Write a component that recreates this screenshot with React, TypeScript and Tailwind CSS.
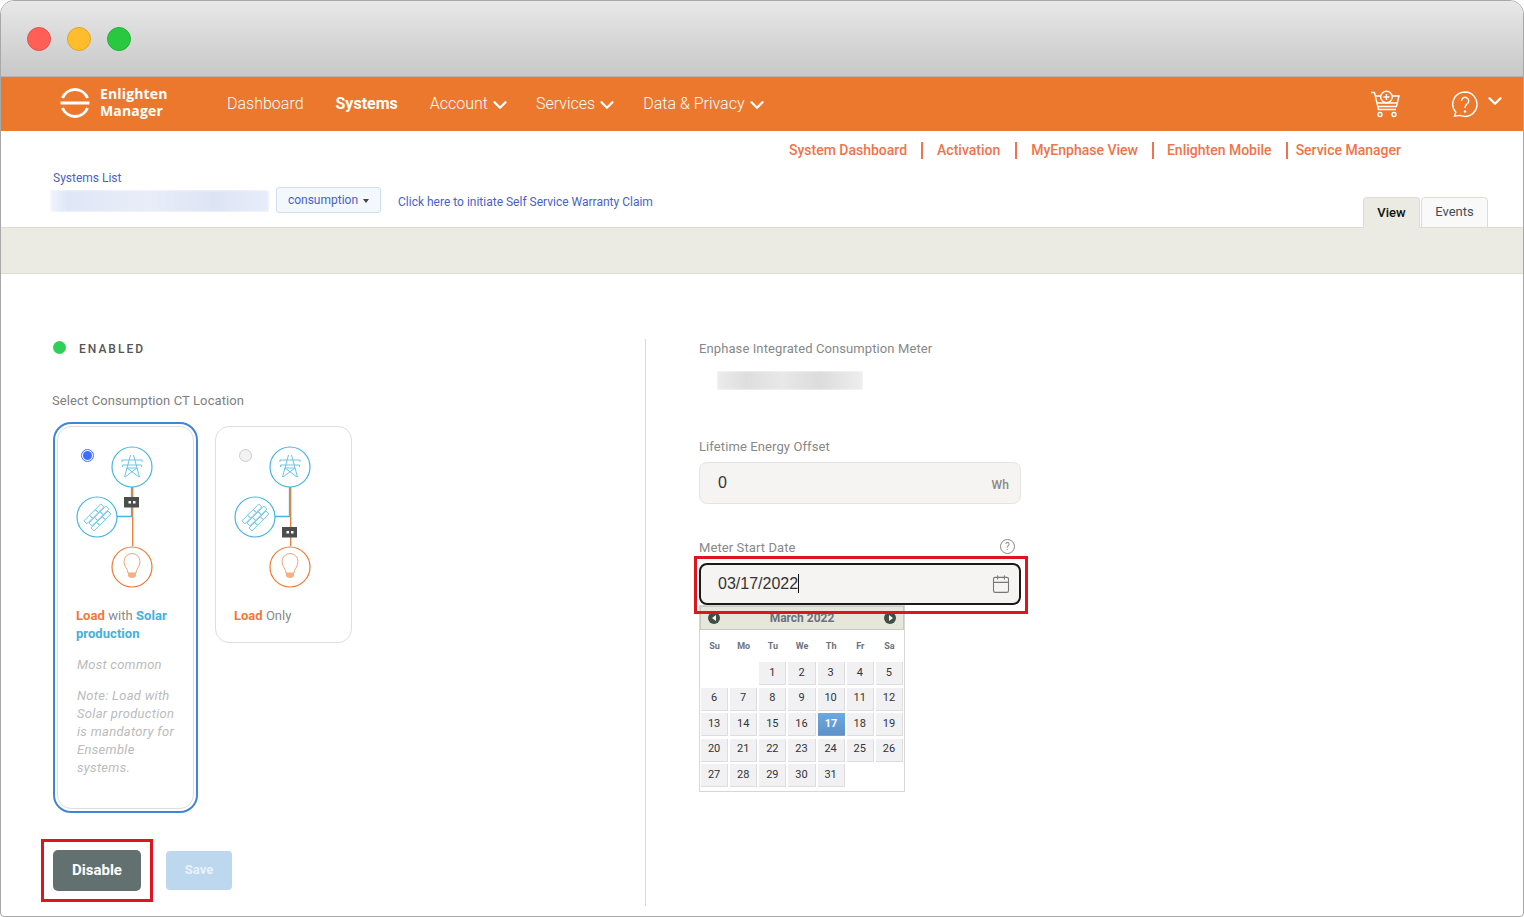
import { ChevronDown, Calendar } from 'lucide-react';

const navItems = [
  { label: 'Dashboard', ml: 'ml-0' },
  { label: 'Systems', bold: true, ml: 'ml-[32px]' },
  { label: 'Account', caret: true, ml: 'ml-[32px]' },
  { label: 'Services', caret: true, ml: 'ml-[25px]' },
  { label: 'Data & Privacy', caret: true, ml: 'ml-[25px]' },
];

const weekDays = ['Su', 'Mo', 'Tu', 'We', 'Th', 'Fr', 'Sa'];
const days = [0, 0, 1, 2, 3, 4, 5, 6, 7, 8, 9, 10, 11, 12, 13, 14, 15, 16, 17, 18, 19, 20, 21, 22, 23, 24, 25, 26, 27, 28, 29, 30, 31];

function Logo() {
  return (
    <svg width="30" height="30" viewBox="0 0 30 30" fill="none" stroke="#fff" strokeWidth="3">
      <path d="M2.5 10A13.5 13.5 0 0 1 27.5 10" />
      <path d="M2.5 20A13.5 13.5 0 0 0 27.5 20" />
      <path d="M0.5 15H29.5" />
    </svg>
  );
}

function Cart() {
  return (
    <svg width="30" height="28" viewBox="0 0 30 28" fill="none" stroke="#fff" strokeWidth="1.4">
      <path d="M1 2.5H4.5L8.5 19.5H26" />
      <path d="M5.5 6H10.5M22 6H29L26.5 16.5H7.8" />
      <path d="M7 13H27.5" />
      <circle cx="16.5" cy="7" r="5.8" />
      <path d="M16.5 4V10M13.5 7H19.5" />
      <circle cx="10" cy="24.5" r="2" />
      <circle cx="24" cy="24.5" r="2" />
    </svg>
  );
}

function Help() {
  return (
    <svg width="26" height="27" viewBox="0 0 26 27" fill="none" stroke="#fff" strokeWidth="1.4">
      <path d="M13 1A12.2 12.2 0 1 1 8 24.4L2.5 25.2L3.8 21.2A12.2 12.2 0 0 1 13 1Z" />
      <path d="M9.5 10A3.6 3.6 0 1 1 15 13C13.6 14 13 15 13 17" />
      <circle cx="13" cy="20.5" r="0.6" />
    </svg>
  );
}

// grid / solar / load schematic, the meter block moves with the CT location
function Diagram({ meterY }: { meterY: number }) {
  const rows = [-6.5, -1.5, 3.5];
  const cols = [-12, -4, 4];
  return (
    <svg width="80" height="144" viewBox="0 0 80 144" fill="none">
      <path d="M56.7 41V100" stroke="#ee7a30" strokeWidth="1.3" />
      <path d="M55.5 41V70.5H41" stroke="#45b5e0" strokeWidth="1.3" />
      <circle cx="56" cy="21" r="20" fill="#fff" stroke="#45b5e0" strokeWidth="1.2" />
      <circle cx="21" cy="71" r="20" fill="#fff" stroke="#45b5e0" strokeWidth="1.2" />
      <circle cx="56" cy="121" r="20" fill="#fff" stroke="#ee7a30" strokeWidth="1.2" />
      <g stroke="#6cc4e6" strokeWidth="1">
        <path d="M54.5 9L48.5 31M57.5 9L63.5 31" />
        <path d="M46 14H66M46 14V16M66 14V16M46.5 19H65.5M46.5 19V21M65.5 19V21M51 22H61" />
        <path d="M51 22L63 31M61 22L49 31" />
      </g>
      <g stroke="#6cc4e6" strokeWidth="0.9" transform="rotate(-45 21 71)">
        {rows.map((y, r) =>
          cols.map(x => (
            <rect key={`${r}${x}`} x={21 + x + (r === 1 ? 2 : 0)} y={71 + y} width="8" height="4.2" />
          ))
        )}
      </g>
      <path d="M52 127C52 123 48 121 48 115.5A8 8 0 0 1 64 115.5C64 121 60 123 60 127Z" stroke="#f0a577" strokeWidth="1" />
      <path d="M52 127H60V130C59 132.5 53 132.5 52 130Z" fill="#f3b088" />
      <rect x={48} y={meterY} width="15" height="10.5" fill="#4d4d4d" />
      <rect x={52.5} y={meterY + 4} width="2.5" height="2.5" fill="#fff" />
      <rect x={57} y={meterY + 4} width="2.5" height="2.5" fill="#fff" />
    </svg>
  );
}

export default function App() {
  return (
    <div className="relative h-[917px] w-[1524px] overflow-hidden bg-white font-['Roboto',sans-serif]">
      <div className="flex h-[917px] flex-col overflow-hidden rounded-t-[14px] rounded-b-[4px] border border-[#a8a8a8]">
        {/* window chrome */}
        <div className="flex h-[76px] shrink-0 items-center gap-[14px] border-b border-[#b5b5b5] bg-gradient-to-b from-[#e8e8e8] to-[#c8c8c8] pl-[26px]">
          <span className="h-6 w-6 rounded-full border border-[#e5524d] bg-[#ff5f57]" />
          <span className="ml-[2px] h-6 w-6 rounded-full border border-[#e0a528] bg-[#ffbd2e]" />
          <span className="ml-[2px] h-6 w-6 rounded-full border border-[#22b23a] bg-[#28c940]" />
        </div>

        {/* orange nav */}
        <div className="flex h-[54px] shrink-0 items-center bg-[#eb782d] pl-[59px] text-white">
          <div className="mb-[2px]"><Logo /></div>
          <div className="mb-[4px] ml-[10px] w-[117px] font-['Open_Sans',sans-serif] text-[14px] leading-[17px] font-bold tracking-[0.15px]">
            <div>Enlighten</div>
            <div>Manager</div>
          </div>
          <div className="ml-[10px] flex items-center text-[16px]">
            {navItems.map(item => (
              <div key={item.label} className={`flex items-center ${item.ml} ${item.bold ? 'font-bold' : 'font-light'}`}>
                {item.label}
                {item.caret && <ChevronDown size={22} strokeWidth={2.5} className="ml-[1px] mt-[2px]" />}
              </div>
            ))}
          </div>
          <div className="ml-auto flex items-center">
            <Cart />
            <div className="ml-[52px]"><Help /></div>
            <ChevronDown size={22} strokeWidth={2.5} className="mb-[6px] ml-[6px] mr-[17px]" />
          </div>
        </div>

        {/* sub header */}
        <div className="relative h-[96px] shrink-0">
          <div className="flex h-[38px] items-center justify-end pr-[122px] pt-[1px] text-[14px] font-medium text-[#f0734a]">
            <span className="pr-[14px]">System Dashboard</span>
            <span className="border-l-2 border-[#f0734a] pl-[14px] pr-[15px] leading-[17px]">Activation</span>
            <span className="border-l-2 border-[#f0734a] pl-[14px] pr-[14px] leading-[17px]">MyEnphase View</span>
            <span className="border-l-2 border-[#f0734a] pl-[13px] pr-[14px] leading-[17px]">Enlighten Mobile</span>
            <span className="border-l-2 border-[#f0734a] pl-[8px] leading-[17px]">Service Manager</span>
          </div>
          <div className="pl-[52px] text-[12px] text-[#4a5fc7]">Systems List</div>
          <div className="flex items-start pl-[49px]">
            <div className="mt-[3px] h-[22px] w-[219px] overflow-hidden">
              <div className="h-full w-full bg-[linear-gradient(90deg,#f1f4fb_0%,#dfe6f7_8%,#e6ebf8_30%,#e9edf9_45%,#dde4f5_75%,#e8edf9_100%)] blur-[1px]" />
            </div>
            <div className="ml-[7px] flex h-[26px] w-[105px] items-center justify-center rounded-[3px] border border-[#cfdff0] bg-[#f3f8fc] text-[12px] text-[#4a5fc7]">
              consumption
              <span className="ml-[5px] mt-[1px] h-0 w-0 border-x-[3.5px] border-t-[4px] border-x-transparent border-t-[#444]" />
            </div>
            <div className="ml-[17px] mt-[6px] text-[12px] text-[#4a5fc7]">Click here to initiate Self Service Warranty Claim</div>
          </div>
          <div className="absolute bottom-[-1px] right-[35px] flex items-end gap-[1px] text-[13px]">
            <div className="flex h-[31px] w-[57px] items-center justify-center rounded-t-[4px] border border-b-0 border-[#dcdccf] bg-[#ecebe3] pb-[1px] font-medium text-[#111]">View</div>
            <div className="flex h-[31px] w-[67px] items-center justify-center rounded-t-[4px] border border-[#dcdccf] bg-[#f9f9f9] pb-[1px] text-[#444c55]">Events</div>
          </div>
        </div>

        {/* band */}
        <div className="h-[47px] shrink-0 border-y border-[#dddcd2] bg-[#ecebe3]" />

        {/* main */}
        <div className="flex flex-1 pb-[10px] pt-[65px]">
          {/* left column */}
          <div className="flex w-[645px] shrink-0 flex-col border-r border-[#d9d9d9] pl-[52px]">
            <div className="mt-[1px] flex h-[18px] items-center">
              <span className="mb-[3px] h-[13px] w-[13px] rounded-full bg-[#2fcf5a]" />
              <span className="ml-[13px] text-[12px] font-medium tracking-[2px] text-[#555]">ENABLED</span>
            </div>
            <div className="-ml-[1px] mt-[33px] text-[13px] tracking-[0.1px] text-[#808080]">Select Consumption CT Location</div>
            <div className="mt-[11px] flex items-start gap-[17px]">
              <div className="h-[391px] w-[145px] rounded-[18px] border-2 border-[#3f87d4] p-[2px]">
                <div className="h-[383px] rounded-[14px] border border-[#dedede] pl-[18px] pt-[19px]">
                  <div className="relative">
                    <Diagram meterY={51} />
                    <span className="absolute left-[5px] top-[3px] flex h-[13px] w-[13px] items-center justify-center rounded-full border border-[#3d6ff5]">
                      <span className="h-[9px] w-[9px] rounded-full bg-[#3d6ff5]" />
                    </span>
                  </div>
                  <div className="mt-[17px] w-[105px] text-[13px] leading-[18px] tracking-[0.05px] text-[#8a8a8a]">
                    <b className="font-bold text-[#ee7a3c]">Load</b> with <b className="font-bold text-[#45b0dc]">Solar production</b>
                  </div>
                  <div className="mt-[13px] pl-[1px] text-[13px] italic leading-[18px] tracking-[0.25px] text-[#bbb]">Most common</div>
                  <div className="mt-[13px] w-[108px] pl-[1px] text-[13px] italic leading-[18px] tracking-[0.3px] text-[#bbb]">
                    Note: Load with Solar production is mandatory for Ensemble systems.
                  </div>
                </div>
              </div>
              <div className="mt-[4px] h-[217px] w-[137px] rounded-[14px] border border-[#dedede] pl-[18px] pt-[19px]">
                <div className="relative">
                  <Diagram meterY={81} />
                  <span className="absolute left-[5px] top-[3px] h-[13px] w-[13px] rounded-full border border-[#ccc] bg-[#f2f2f2]" />
                </div>
                <div className="mt-[17px] text-[13px] leading-[18px] text-[#8a8a8a]">
                  <b className="font-bold text-[#ee7a3c]">Load</b> Only
                </div>
              </div>
            </div>
            <div className="mt-[37px] flex items-start">
              <button className="flex h-[41px] w-[88px] items-center justify-center rounded-[5px] bg-[#637070] text-[15px] font-bold text-white">Disable</button>
              <button className="ml-[25px] mt-[1px] flex h-[39px] w-[66px] items-center justify-center rounded-[4px] bg-[#bdd7ee] text-[13px] font-bold text-[#e9f2fa]">Save</button>
            </div>
          </div>

          {/* right column */}
          <div className="ml-[53px] w-[322px] text-[13px] tracking-[0.1px] text-[#888]">
            <div className="mt-[1px] h-[18px] leading-[18px]">Enphase Integrated Consumption Meter</div>
            <div className="ml-[18px] mt-[13px] h-[19px] w-[146px] overflow-hidden">
              <div className="h-full w-full bg-[linear-gradient(90deg,#ececec_0%,#dedede_20%,#e8e8e8_45%,#dcdcdc_70%,#eeeeee_100%)] blur-[1px]" />
            </div>
            <div className="mt-[48px] h-[18px] leading-[18px]">Lifetime Energy Offset</div>
            <div className="mt-[6px] flex h-[42px] items-center justify-between rounded-[8px] border border-[#e4e4e4] bg-[#f5f4f2] pl-[18px] pr-[11px]">
              <span className="font-['Liberation_Sans',sans-serif] text-[16px] text-[#333]">0</span>
              <span className="mt-[4px] text-[12px] font-medium text-[#888]">Wh</span>
            </div>
            <div className="mt-[35px] flex h-[18px] items-center justify-between leading-[18px]">
              <span>Meter Start Date</span>
              <span className="mb-[3px] mr-[6px] flex h-[15px] w-[15px] items-center justify-center rounded-full border border-[#888] text-[10px] leading-none">?</span>
            </div>
            <div className="mt-[6px] flex h-[42px] items-center justify-between rounded-[8px] border-2 border-[#1a1a1a] bg-[#f5f4f2] pl-[17px] pr-[8px]">
              <span className="mb-[1px] border-r border-[#111] font-['Liberation_Sans',sans-serif] text-[16px] leading-[19px] tracking-normal text-[#333]">03/17/2022</span>
              <Calendar size={20} strokeWidth={1.3} className="text-[#777]" />
            </div>
            {/* datepicker */}
            <div className="relative z-0 h-[187px] w-[206px] border border-[#d6d6d6] bg-white tracking-normal">
              <div className="flex h-[24px] items-center justify-between border border-[#c9c9c0] bg-[#e6e6da] px-[7px]">
                <span className="flex h-[12px] w-[12px] items-center justify-center rounded-full bg-[#3f4f47]">
                  <span className="mr-[1px] h-0 w-0 border-y-[3px] border-r-[4px] border-y-transparent border-r-white" />
                </span>
                <span className="text-[12px] font-bold text-[#6b7280]">March 2022</span>
                <span className="flex h-[12px] w-[12px] items-center justify-center rounded-full bg-[#3f4f47]">
                  <span className="ml-[1px] h-0 w-0 border-y-[3px] border-l-[4px] border-y-transparent border-l-white" />
                </span>
              </div>
              <div className="grid h-[32px] grid-cols-7 items-center gap-x-[2px] px-[1px] pt-[2px] text-center text-[9px] font-bold text-[#6b7280]">
                {weekDays.map(d => <div key={d}>{d}</div>)}
              </div>
              <div className="grid grid-cols-7 gap-x-[2px] gap-y-[2.5px] px-[1px]">
                {days.map((d, i) =>
                  d === 0 ? <div key={i} /> : (
                    <div
                      key={i}
                      className={d === 17
                        ? 'flex h-[23px] items-center justify-center border-b border-[#7aa3cc] bg-gradient-to-b from-[#6ea8e0] to-[#5d92c8] text-[11px] font-bold text-white'
                        : 'flex h-[23px] items-center justify-center border-b border-r border-[#ddd] bg-[#f1f1f3] text-[11px] text-[#333]'}
                    >
                      {d}
                    </div>
                  )
                )}
              </div>
            </div>
          </div>
        </div>
      </div>

      {/* red annotation boxes */}
      <div className="absolute left-[694px] top-[556px] h-[58px] w-[334px] border-[3px] border-[#e0141f]" />
      <div className="absolute left-[41px] top-[839px] h-[63px] w-[112px] border-[3px] border-[#e0141f]" />
    </div>
  );
}
